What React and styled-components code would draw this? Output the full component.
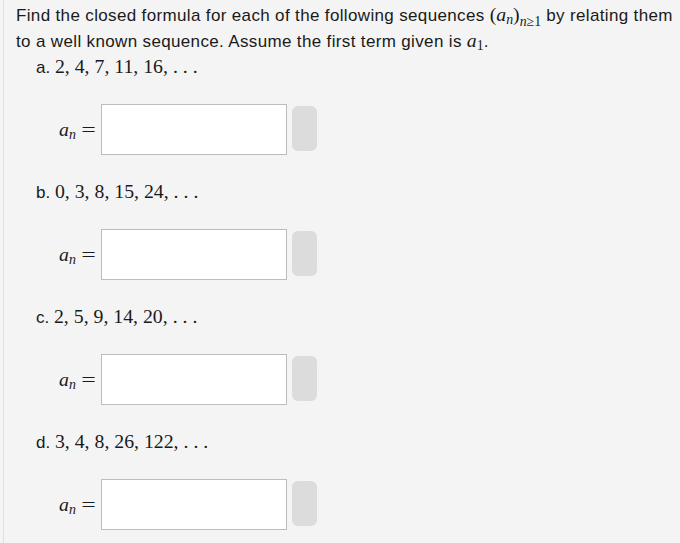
import React from 'react'
import styled, { createGlobalStyle } from 'styled-components'

const GlobalStyle = createGlobalStyle`
    html, body {
        margin: 0;
        padding: 0;
        background: #f4f4f4;
    }
`

const Page = styled.div`
    margin-left: 3px;
    min-height: 543px;
    box-sizing: border-box;
    border-left: 1px solid #e0e0e0;
    padding: 2px 0 0 12px;
    background: #f4f4f4;
    color: #1a1a1a;
    font-family: "Liberation Sans", Arial, sans-serif;
    font-size: 17px;
    line-height: 25px;
`

const Intro = styled.div`
    margin: 0;
    letter-spacing: 0.35px;
`

const MathSpan = styled.span`
    font-family: "Liberation Serif", "Times New Roman", serif;
    font-size: 19.8px;
    letter-spacing: 0;
    white-space: nowrap;
`

const Var = styled.i`
    font-style: italic;
`

const Sub = styled.sub`
    font-size: 0.7em;
    vertical-align: ${p => (p.$deep ? '-0.35em' : '-0.25em')};
    line-height: 0;
`

const Eq = styled.span`
    display: inline-block;
    margin-left: 7px;
    transform: scaleX(1.3);
`

const Item = styled.div`
    height: 25px;
    padding-left: 20px;
`

const AnswerRow = styled.div`
    display: flex;
    align-items: center;
    margin: 25px 0 24px;
`

const Label = styled.div`
    width: 85px;
    box-sizing: border-box;
    padding-right: 7px;
    text-align: right;
`

const Box = styled.div`
    width: 186px;
    height: 51px;
    box-sizing: border-box;
    background: #fff;
    border: 1px solid #bcbcbc;
`

const Check = styled.div`
    width: 25px;
    height: 45px;
    margin-left: 5px;
    margin-top: -2px;
    border-radius: 6px;
    background: #dcdcdc;
`

const Seq = ({ terms }) => (
  <MathSpan>{terms.join(', ')}, . . .</MathSpan>
)

const Question = ({ letter, terms }) => (
  <>
    <Item>
      {letter}. <Seq terms={terms} />
    </Item>
    <AnswerRow>
      <Label>
        <MathSpan>
          <Var>a</Var><Sub><Var>n</Var></Sub><Eq>=</Eq>
        </MathSpan>
      </Label>
      <Box />
      <Check />
    </AnswerRow>
  </>
)

const questions = [
  { letter: 'a', terms: [2, 4, 7, 11, 16] },
  { letter: 'b', terms: [0, 3, 8, 15, 24] },
  { letter: 'c', terms: [2, 5, 9, 14, 20] },
  { letter: 'd', terms: [3, 4, 8, 26, 122] },
]

const App = () => {
  return (
    <Page>
      <GlobalStyle />
      <Intro>
        Find the closed formula for each of the following sequences{' '}
        <MathSpan>
          (<Var>a</Var><Sub><Var>n</Var></Sub>)<Sub $deep><Var>n</Var>≥1</Sub>
        </MathSpan>{' '}
        by relating them to a well known sequence. Assume the first term given is{' '}
        <MathSpan>
          <Var>a</Var><Sub>1</Sub>
        </MathSpan>
        .
      </Intro>
      {questions.map(q => (
        <Question key={q.letter} letter={q.letter} terms={q.terms} />
      ))}
    </Page>
  )
}

export default App
